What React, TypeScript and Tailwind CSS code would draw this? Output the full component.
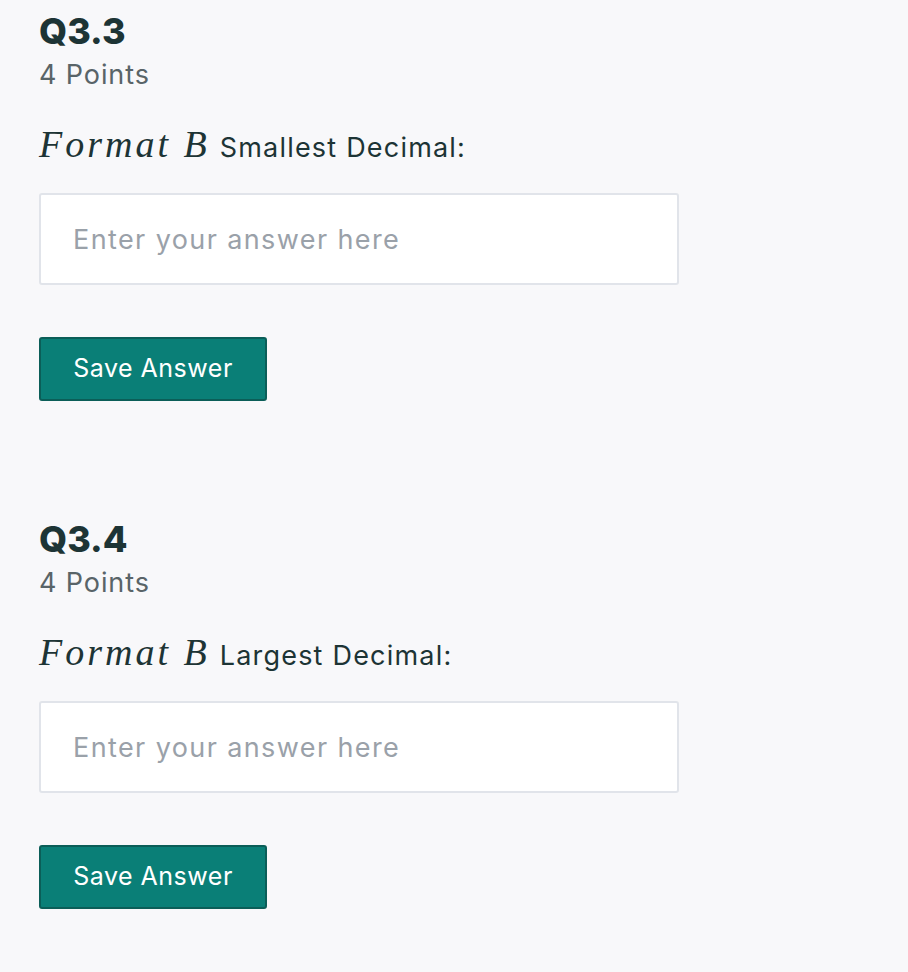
import React from 'react';

type Question = { id: string; points: number; label: string };

const QUESTIONS: Question[] = [
  { id: 'Q3.3', points: 4, label: 'Smallest Decimal:' },
  { id: 'Q3.4', points: 4, label: 'Largest Decimal:' },
];

const sans = "font-['Inter','Open_Sans',sans-serif]";

const QuestionBlock = ({ q }: { q: Question }): JSX.Element => (
  <section className="flex flex-col items-start">
    <h2 className="text-[36px] font-extrabold leading-[40px] text-[#1d3435]">{q.id}</h2>
    <p className="mt-[7px] text-[27px] leading-[34px] tracking-[0.9px] text-[#596468]">{q.points} Points</p>
    <p className="mt-[32px] flex items-baseline gap-[10px] text-[27px] leading-[40px] tracking-[1.2px] text-[#1d3435]">
      <span className="font-['Liberation_Serif',serif] text-[38px] italic tracking-[3px]">Format B</span>
      <span>{q.label}</span>
    </p>
    <input
      type="text"
      placeholder="Enter your answer here"
      className="mt-[25px] h-[92px] w-[640px] rounded-[3px] border-2 border-[#e1e4ea] bg-white px-[32px] text-[27px] tracking-[1.4px] text-[#1d3435] placeholder:text-[#9aa1a9] outline-none"
    />
    <button
      type="button"
      className="mt-[52px] h-[64px] w-[228px] rounded-[3px] border-2 border-[#0b5e58] bg-[#0a7f77] text-[25px] tracking-[0.5px] text-white"
    >
      Save Answer
    </button>
  </section>
);

export default function App(): JSX.Element {
  return (
    <div className={`${sans} min-h-[972px] bg-[#f8f8fa] pl-[39px] pt-[11px]`}>
      <div className="flex flex-col gap-[118px]">
        {QUESTIONS.map((q) => (
          <QuestionBlock key={q.id} q={q} />
        ))}
      </div>
    </div>
  );
}
